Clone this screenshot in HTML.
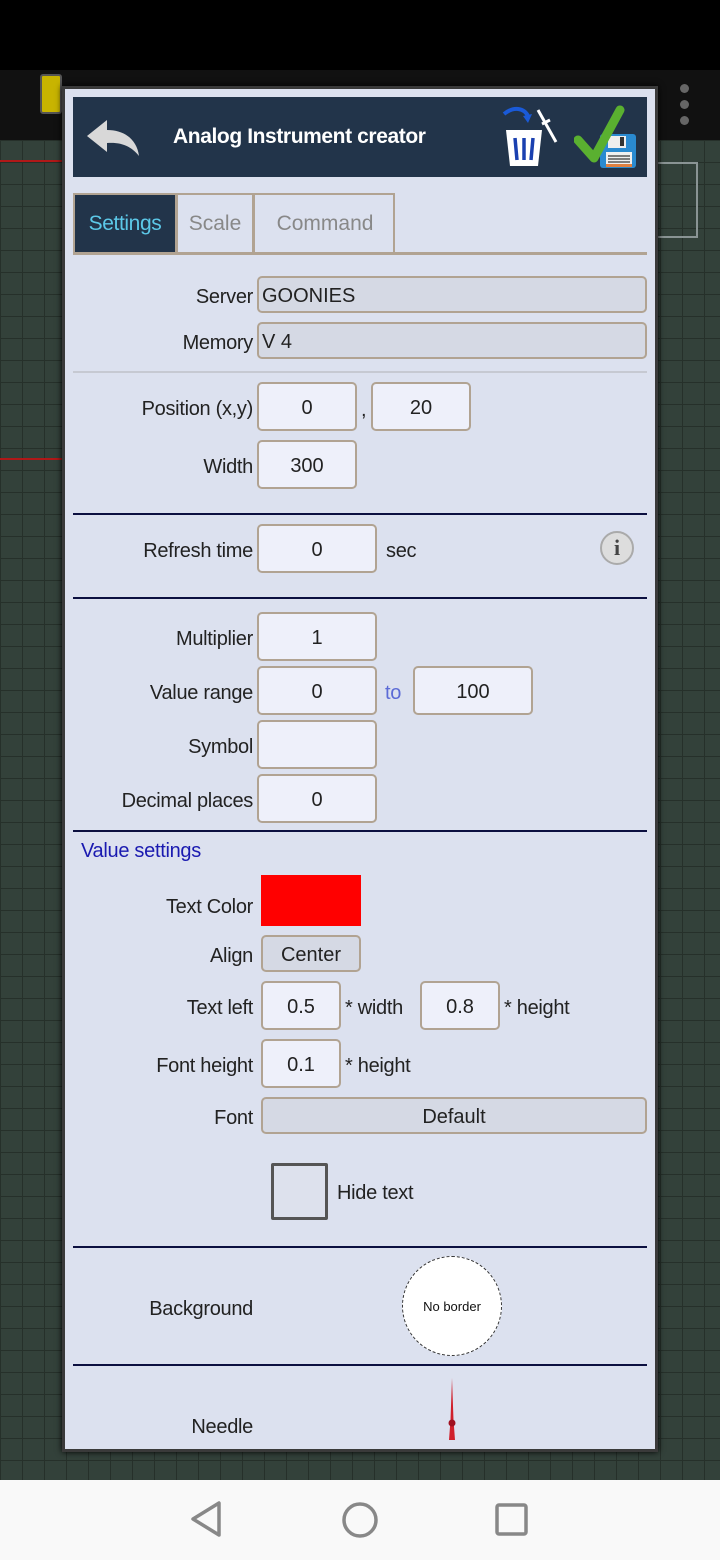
<!DOCTYPE html><html><head><style>
*{margin:0;padding:0;box-sizing:border-box}
body{width:720px;height:1560px;position:relative;overflow:hidden;font-family:"Liberation Sans",sans-serif;background:#33413a;
background-image:linear-gradient(#26302a 1px,transparent 1px),linear-gradient(90deg,#26302a 1px,transparent 1px);background-size:22px 22px;background-position:0 140px}
.a{position:absolute}
.lbl{position:absolute;right:467px;font-size:20px;color:#222;text-align:right;white-space:nowrap;line-height:24px;letter-spacing:-0.3px}
.in{position:absolute;background:#eef0fa;border:2px solid #b1a392;border-radius:5px;font-size:20px;color:#222;text-align:center;display:flex;align-items:center;justify-content:center;padding-top:3px}
.gr{background:#d5d9e4}
.t{position:absolute;font-size:20px;color:#222;line-height:24px;white-space:nowrap;letter-spacing:-0.3px}
.hl{position:absolute;left:73px;width:574px;height:2px;background:#0c1040}
</style></head><body>
<div class="a" style="left:0;top:0;width:720px;height:70px;background:#000"></div>
<div class="a" style="left:0;top:70px;width:720px;height:70px;background:#111"></div>
<div class="a" style="left:40px;top:74px;width:22px;height:40px;background:#c8b400;border:2px solid #555;border-radius:3px"></div>
<div class="a" style="left:0;top:160px;width:64px;height:300px;border:2px solid #b01818;border-left:none"></div>
<div class="a" style="left:656px;top:162px;width:42px;height:76px;border:2px solid #8a9494;border-left:none"></div>
<div class="a" style="left:680px;top:84px;width:9px;height:9px;border-radius:50%;background:#666"></div>
<div class="a" style="left:680px;top:100px;width:9px;height:9px;border-radius:50%;background:#666"></div>
<div class="a" style="left:680px;top:116px;width:9px;height:9px;border-radius:50%;background:#666"></div>
<div class="a" style="left:62px;top:86px;width:596px;height:1366px;background:#dce1ef;border:3px solid #3a3a3a;box-shadow:0 0 6px #000"></div>
<div class="a" style="left:73px;top:97px;width:574px;height:80px;background:#22344a"></div>
<svg class="a" style="left:85px;top:118px" width="56" height="40" viewBox="0 0 56 40"><path d="M2 18 L22 2 L22 12 C40 12 52 22 54 38 C46 28 36 24 22 25 L22 34 Z" fill="#d8d8d8"/></svg>
<div class="a" style="left:173px;top:125px;font-size:21px;font-weight:bold;color:#fff;letter-spacing:-0.4px">Analog Instrument creator</div>
<svg class="a" style="left:498px;top:102px" width="62" height="70" viewBox="0 0 62 70"><path d="M6 12 C16 4 26 6 30 14" stroke="#1a5ad8" stroke-width="4" fill="none"/><path d="M25 14 L34 12 L30 21Z" fill="#1a5ad8"/><path d="M40 8 L58 40" stroke="#fff" stroke-width="3"/><path d="M44 22 L52 18" stroke="#fff" stroke-width="3"/><path d="M8 28 H44 L40 64 H12 Z" fill="#fff"/><path d="M17 36 L19 58 M26 36 V58 M35 36 L33 58" stroke="#1a40b0" stroke-width="3.5"/></svg>
<svg class="a" style="left:574px;top:104px" width="64" height="66" viewBox="0 0 64 66"><rect x="26" y="30" width="36" height="34" rx="3" fill="#2a8ad0"/><rect x="34" y="32" width="18" height="12" fill="#eee"/><rect x="46" y="33" width="4" height="9" fill="#333"/><rect x="32" y="48" width="26" height="14" fill="#f0f0f0"/><path d="M34 52H56M34 55H56M34 58H56" stroke="#555" stroke-width="1.5"/><rect x="32" y="60" width="26" height="3" fill="#e08040"/><path d="M4 36 L20 54 L46 6" stroke="#5ab030" stroke-width="9" fill="none" stroke-linecap="round" stroke-linejoin="round"/></svg>
<div class="a" style="left:73px;top:193px;width:322px;height:60px;border:2px solid #b1a392;border-bottom:none"></div>
<div class="a" style="left:75px;top:195px;width:100px;height:58px;background:#22344a;color:#5cc8e8;font-size:21px;display:flex;align-items:center;justify-content:center;letter-spacing:-0.4px">Settings</div>
<div class="a" style="left:175px;top:195px;width:80px;height:58px;border-right:3px solid #b1a392;border-left:3px solid #b1a392;color:#888;font-size:21px;display:flex;align-items:center;justify-content:center">Scale</div>
<div class="a" style="left:255px;top:195px;width:140px;height:58px;color:#888;font-size:21px;display:flex;align-items:center;justify-content:center">Command</div>
<div class="a" style="left:73px;top:252px;width:574px;height:3px;background:#b1a392"></div>

<div class="lbl" style="top:285px">Server</div><div class="in gr" style="left:257px;top:276px;width:390px;height:37px;justify-content:flex-start;padding-left:3px">GOONIES</div>
<div class="lbl" style="top:331px">Memory</div><div class="in gr" style="left:257px;top:322px;width:390px;height:37px;justify-content:flex-start;padding-left:3px">V 4</div>
<div class="a" style="left:73px;top:371px;width:574px;height:2px;background:#c6c9d2"></div>
<div class="lbl" style="top:397px">Position (x,y)</div><div class="in" style="left:257px;top:382px;width:100px;height:49px">0</div><div class="t" style="left:361px;top:398px">,</div><div class="in" style="left:371px;top:382px;width:100px;height:49px">20</div>
<div class="lbl" style="top:455px">Width</div><div class="in" style="left:257px;top:440px;width:100px;height:49px">300</div>
<div class="hl" style="top:513px"></div>
<div class="lbl" style="top:539px">Refresh time</div><div class="in" style="left:257px;top:524px;width:120px;height:49px">0</div><div class="t" style="left:386px;top:539px">sec</div>
<div class="a" style="left:600px;top:531px;width:34px;height:34px;border-radius:50%;border:2px solid #aaa;background:#ddd;color:#444;font:bold 22px 'Liberation Serif',serif;text-align:center;line-height:30px">i</div>
<div class="hl" style="top:597px"></div>
<div class="lbl" style="top:627px">Multiplier</div><div class="in" style="left:257px;top:612px;width:120px;height:49px">1</div>
<div class="lbl" style="top:681px">Value range</div><div class="in" style="left:257px;top:666px;width:120px;height:49px">0</div><div class="t" style="left:385px;top:681px;color:#5c6bd6">to</div><div class="in" style="left:413px;top:666px;width:120px;height:49px">100</div>
<div class="lbl" style="top:735px">Symbol</div><div class="in" style="left:257px;top:720px;width:120px;height:49px"></div>
<div class="lbl" style="top:789px">Decimal places</div><div class="in" style="left:257px;top:774px;width:120px;height:49px">0</div>
<div class="hl" style="top:830px"></div>
<div class="t" style="left:81px;top:839px;color:#1a1ab0">Value settings</div>
<div class="lbl" style="top:895px">Text Color</div><div class="a" style="left:261px;top:875px;width:100px;height:51px;background:#f00"></div>
<div class="lbl" style="top:944px">Align</div><div class="in gr" style="left:261px;top:935px;width:100px;height:37px">Center</div>
<div class="lbl" style="top:996px">Text left</div><div class="in" style="left:261px;top:981px;width:80px;height:49px">0.5</div><div class="t" style="left:345px;top:996px">* width</div><div class="in" style="left:420px;top:981px;width:80px;height:49px">0.8</div><div class="t" style="left:504px;top:996px">* height</div>
<div class="lbl" style="top:1054px">Font height</div><div class="in" style="left:261px;top:1039px;width:80px;height:49px">0.1</div><div class="t" style="left:345px;top:1054px">* height</div>
<div class="lbl" style="top:1106px">Font</div><div class="in gr" style="left:261px;top:1097px;width:386px;height:37px">Default</div>
<div class="a" style="left:271px;top:1163px;width:57px;height:57px;border:3px solid #555;border-radius:2px;background:#dde1ed"></div>
<div class="t" style="left:337px;top:1181px">Hide text</div>
<div class="hl" style="top:1246px"></div>
<div class="lbl" style="top:1297px">Background</div>
<div class="a" style="left:402px;top:1256px;width:100px;height:100px;border-radius:50%;background:#fff;border:1px dashed #333;font-size:13px;color:#111;display:flex;align-items:center;justify-content:center">No border</div>
<div class="hl" style="top:1364px"></div>
<div class="lbl" style="top:1415px">Needle</div>
<svg class="a" style="left:446px;top:1376px" width="12" height="66" viewBox="0 0 12 66"><path d="M6 2 L7.5 44 L9 64 H3 L4.5 44 Z" fill="#d0202c"/><circle cx="6" cy="47" r="3.5" fill="#a01020"/></svg>
<div class="a" style="left:0;top:1480px;width:720px;height:80px;background:#f9f9f9"></div>
<svg class="a" style="left:0;top:1480px" width="720" height="80"><path d="M219 23 L219 55 L193 39 Z" fill="none" stroke="#888" stroke-width="3.5" stroke-linejoin="round"/><circle cx="360" cy="40" r="16" fill="none" stroke="#888" stroke-width="3.5"/><rect x="497" y="25" width="29" height="29" rx="2" fill="none" stroke="#888" stroke-width="3.5"/></svg>
</body></html>
